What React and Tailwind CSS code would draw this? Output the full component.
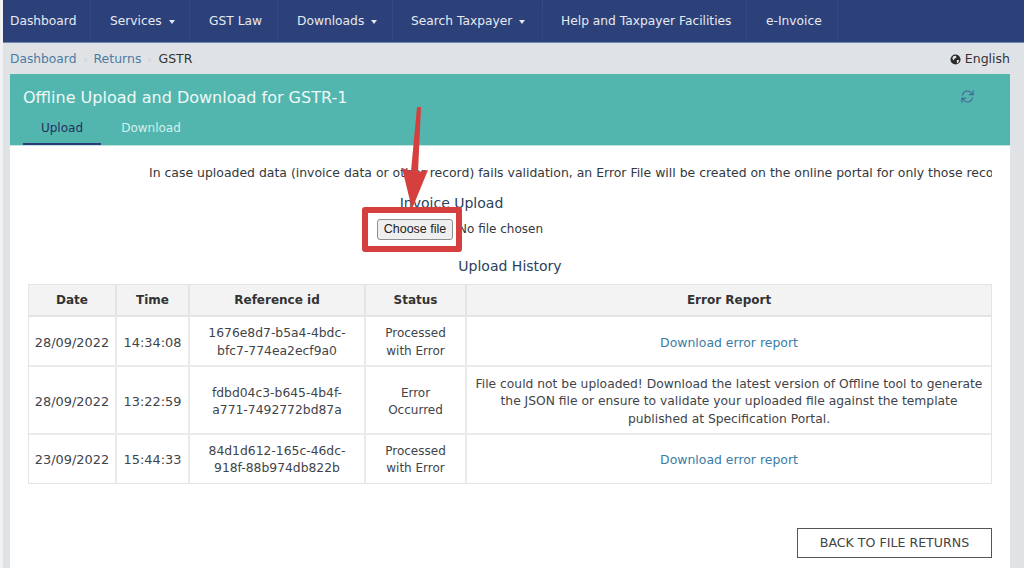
import React from "react";

function Caret() {
  return <span className="ml-[7px] inline-block w-0 h-0 border-x-[3.5px] border-x-transparent border-t-[4px] border-t-[#e4e8f0] align-middle" />;
}

function NavItem({ label, caret, className }) {
  return (
    <div className={`flex items-center h-full pt-[1px] border-r border-dotted border-[#3a4f86] text-[12.25px] text-[#e6e9f0] whitespace-nowrap ${className}`}>
      {label}
      {caret && <Caret />}
    </div>
  );
}

const rows = [
  { date: "28/09/2022", time: "14:34:08", ref: ["1676e8d7-b5a4-4bdc-", "bfc7-774ea2ecf9a0"], status: ["Processed", "with Error"], h: "h-[50px]", pad: "pt-[3px]", link: true },
  { date: "28/09/2022", time: "13:22:59", ref: ["fdbd04c3-b645-4b4f-", "a771-7492772bd87a"], status: ["Error", "Occurred"], h: "h-[68px]", pad: "pt-[4px]", link: false },
  { date: "23/09/2022", time: "15:44:33", ref: ["84d1d612-165c-46dc-", "918f-88b974db822b"], status: ["Processed", "with Error"], h: "h-[48px]", pad: "pt-[2px]", link: true },
];

export default function App() {
  return (
    <div className="relative w-[1024px] h-[568px] overflow-hidden bg-[#dfe3e6] pl-[3px] font-['DejaVu_Sans',sans-serif] text-[#3a3f45]">
      <div className="absolute left-0 top-0 w-[3px] h-full bg-[#f0f2f4]" />
      <nav className="flex h-[43px] bg-[#2c4179] border-b border-[#6f8bb0]">
        <NavItem label="Dashboard" className="w-[88px] pl-[7px]" />
        <NavItem label="Services" caret className="w-[99px] pl-[19px]" />
        <NavItem label="GST Law" className="w-[88px] pl-[19px]" />
        <NavItem label="Downloads" caret className="w-[115px] pl-[19px]" />
        <NavItem label="Search Taxpayer" caret className="w-[150px] pl-[18px]" />
        <NavItem label="Help and Taxpayer Facilities" className="w-[204px] pl-[18px]" />
        <NavItem label="e-Invoice" className="w-[91px] pl-[19px]" />
      </nav>

      <div className="flex items-center justify-between h-[31px] pt-[2px] pl-[7px] pr-[14px] text-[12.25px]">
        <div className="flex items-center">
          <span className="text-[#4d7ba3]">Dashboard</span>
          <span className="ml-[7px] mr-[6px] text-[#c3c9ce] text-[10px]">›</span>
          <span className="text-[#4d7ba3] text-[12.5px]">Returns</span>
          <span className="ml-[6px] mr-[7px] text-[#c3c9ce] text-[10px]">›</span>
          <span className="text-[#333] text-[12.5px]">GSTR</span>
        </div>
        <div className="flex items-center gap-[4px] text-[#333] text-[12.5px]">
          <svg width="11" height="11" viewBox="0 0 12 12">
            <circle cx="6" cy="6" r="5.5" fill="#2b2b2b" />
            <path d="M3.5 2.5 L6.5 2 L7 4 L5 5 L4 7 L2.5 5 Z M7.5 6.5 L10 6.5 L9 9.5 L7.5 10 Z" fill="#e6e8ea" />
          </svg>
          English
        </div>
      </div>

      <main className="ml-[7px] w-[1000px] h-[494px] bg-white">
        <header className="relative h-[72px] bg-[#52b6af] border-b border-[#bfe5e1]">
          <h1 className="pl-[13px] pt-[14px] text-[16px] leading-[20px] font-normal text-[#eef8f7]">
            Offline Upload and Download for GSTR-1
          </h1>
          <div className="flex mt-[10px] pl-[13px] text-[12px] leading-[16px]">
            <div className="w-[78px] h-[27px] pt-[2px] text-center text-[#24305e] border-b-[2px] border-[#2c3a78]">Upload</div>
            <div className="ml-[6px] w-[88px] pt-[2px] text-center text-[#d5efec]">Download</div>
          </div>
          <svg className="absolute right-[35px] top-[15px]" width="15" height="15" viewBox="0 0 24 24" fill="none" stroke="#47649a" strokeWidth="1.8" strokeLinecap="round" strokeLinejoin="round">
            <path d="M4 10a8 8 0 0 1 14-4l3 3" />
            <path d="M21 3v6h-6" />
            <path d="M20 14a8 8 0 0 1-14 4l-3-3" />
            <path d="M3 21v-6h6" />
          </svg>
        </header>

        <div className="pl-[18px] pr-[18px]">
          <div className="mt-[17px] h-[20px] overflow-hidden whitespace-nowrap pl-[121px] text-[12.45px] leading-[20px] text-[#33383d]">
            In case uploaded data (invoice data or other record) fails validation, an Error File will be created on the online portal for only those records that have failed validation
          </div>
          <div className="mt-[10px] text-center pr-[117px] text-[14px] leading-[20px] text-[#2b3f5c]">Invoice Upload</div>
          <div className="flex items-center mt-[5px] h-[22px] pl-[349px] text-[12px] text-[#33383d]">
            <button className="w-[76px] h-[21px] bg-[#efefef] border border-[#8f8f8f] rounded-[3px] font-['Liberation_Sans',sans-serif] text-[12.5px] text-[#222]">Choose file</button>
            <span className="ml-[5px]">No file chosen</span>
          </div>
          <div className="mt-[16px] text-center text-[14px] leading-[20px] text-[#2b3f5c]">Upload History</div>

          <div className="mt-[8px] w-[964px] border border-[#e2e4e6] text-[12px] leading-[17.5px] text-[#3f444a]">
            <div className="flex h-[32px] bg-[#f3f3f3] border-b-2 border-[#e2e4e6] font-bold text-[#333] text-center">
              <div className="w-[88px] pt-[2px] flex items-center justify-center border-r-2 border-[#e2e4e6]">Date</div>
              <div className="w-[73px] pt-[2px] flex items-center justify-center border-r-2 border-[#e2e4e6]">Time</div>
              <div className="w-[176px] pt-[2px] flex items-center justify-center border-r-2 border-[#e2e4e6]">Reference id</div>
              <div className="w-[101px] pt-[2px] flex items-center justify-center border-r-2 border-[#e2e4e6]">Status</div>
              <div className="flex-1 pt-[2px] flex items-center justify-center">Error Report</div>
            </div>
            {rows.map((r, i) => (
              <div key={i} className={`flex ${r.h} text-center ${i < 2 ? "border-b-2 border-[#e8eaec]" : ""}`}>
                <div className={`w-[88px] flex items-center justify-center border-r-2 border-[#e8eaec] text-[12.9px] ${r.pad}`}>{r.date}</div>
                <div className={`w-[73px] flex items-center justify-center border-r-2 border-[#e8eaec] text-[12.9px] ${r.pad}`}>{r.time}</div>
                <div className={`w-[176px] flex flex-col items-center justify-center border-r-2 border-[#e8eaec] text-[12.35px] ${r.pad}`}>
                  <span>{r.ref[0]}</span><span>{r.ref[1]}</span>
                </div>
                <div className={`w-[101px] flex flex-col items-center justify-center border-r-2 border-[#e8eaec] ${r.pad}`}>
                  <span>{r.status[0]}</span><span>{r.status[1]}</span>
                </div>
                <div className={`flex-1 flex flex-col items-center justify-center text-[12.3px] ${r.pad}`}>
                  {r.link ? (
                    <span className="text-[#3a7ca5] text-[12.45px]">Download error report</span>
                  ) : (
                    <>
                      <span className="whitespace-nowrap">File could not be uploaded! Download the latest version of Offline tool to generate</span>
                      <span className="whitespace-nowrap">the JSON file or ensure to validate your uploaded file against the template</span>
                      <span className="whitespace-nowrap">published at Specification Portal.</span>
                    </>
                  )}
                </div>
              </div>
            ))}
          </div>

          <div className="flex justify-end w-[964px] mt-[44px]">
            <button className="w-[195px] h-[30px] pt-[1px] border border-[#555] bg-white text-[12.6px] text-[#444]">BACK TO FILE RETURNS</button>
          </div>
        </div>
      </main>

      {/* annotation overlay */}
      <div className="absolute left-[362px] top-[207px] w-[100px] h-[45px] border-[6px] border-[#d5403f] rounded-[3px]" />
      <svg className="absolute left-[390px] top-[104px]" width="60" height="112" viewBox="0 0 60 112">
        <path d="M27 3 L31 3 L28 68 L38 66 L22 105 L12 64 L21 67 Z" fill="#d5403f" />
      </svg>
    </div>
  );
}
